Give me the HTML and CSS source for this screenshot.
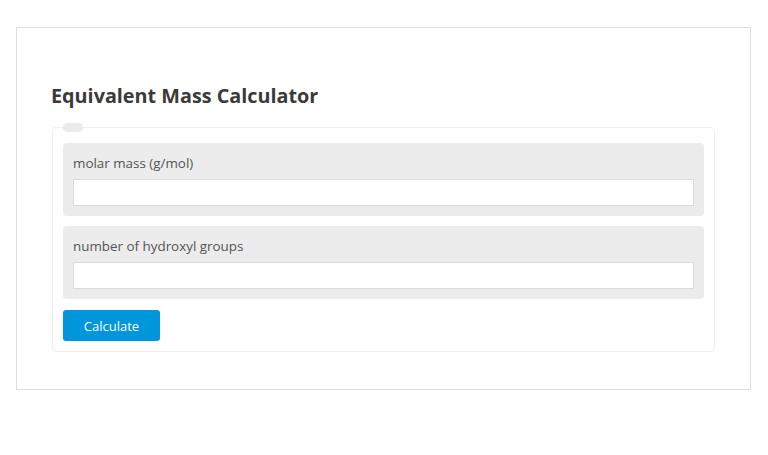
FILE: index.html
```html
<!DOCTYPE html>
<html lang="en">

<head>
    <meta charset="UTF-8">
    <meta name="viewport" content="width=device-width, initial-scale=1.0">
    <title>Equivalent Mass Calculator</title>
    <link rel="stylesheet" href="styles.css">
</head>

<body>
    <div class="calc">
        <h2 class="title">Equivalent Mass Calculator</h2>
        <fieldset class="form">
            <legend></legend>
            <div class="field">
                <label for="molarMass">molar mass (g/mol)</label>
                <input type="text" id="molarMass">
            </div>
            <div class="field">
                <label for="hydroxyl">number of hydroxyl groups</label>
                <input type="text" id="hydroxyl">
            </div>
            <button class="btn">Calculate</button>
        </fieldset>
    </div>
</body>

</html>
```

FILE: styles.css
```css
body {
    margin: 0;
    padding: 27px 0 0 16px;
    font-family: "Open Sans", "Liberation Sans", sans-serif;
    background: #fff;
}

.calc {
    width: 663px;
    border: 1px solid #dedede;
    padding: 54px 35px 37px 35px;
}

.title {
    margin: 0 0 14px -1px;
    font-size: 19.8px;
    font-weight: 700;
    line-height: 27px;
    color: #3a3a3a;
}

.form {
    margin: 0;
    padding: 11px 10px 10px 10px;
    border: 1px solid #efefef;
    border-radius: 4px;
}

.form legend {
    width: 20px;
    height: 9px;
    padding: 0;
    background: #ebebeb;
    border-radius: 5px;
}

.field {
    background: #ebeceb;
    border-radius: 4px;
    padding: 10px 10px 10px 10px;
    margin-bottom: 10px;
}

.field label {
    display: block;
    font-size: 13.4px;
    line-height: 20px;
    color: #555;
    margin-bottom: 6px;
}

.field input {
    display: block;
    box-sizing: border-box;
    width: 100%;
    height: 27px;
    margin: 0;
    border: 1px solid #dadada;
    background: #fff;
}

.btn {
    margin-top: 1px;
    width: 97px;
    height: 31px;
    border: none;
    border-radius: 3px;
    background: #0096db;
    color: #fff;
    font-family: "Open Sans", "Liberation Sans", sans-serif;
    font-size: 13px;
}
```
